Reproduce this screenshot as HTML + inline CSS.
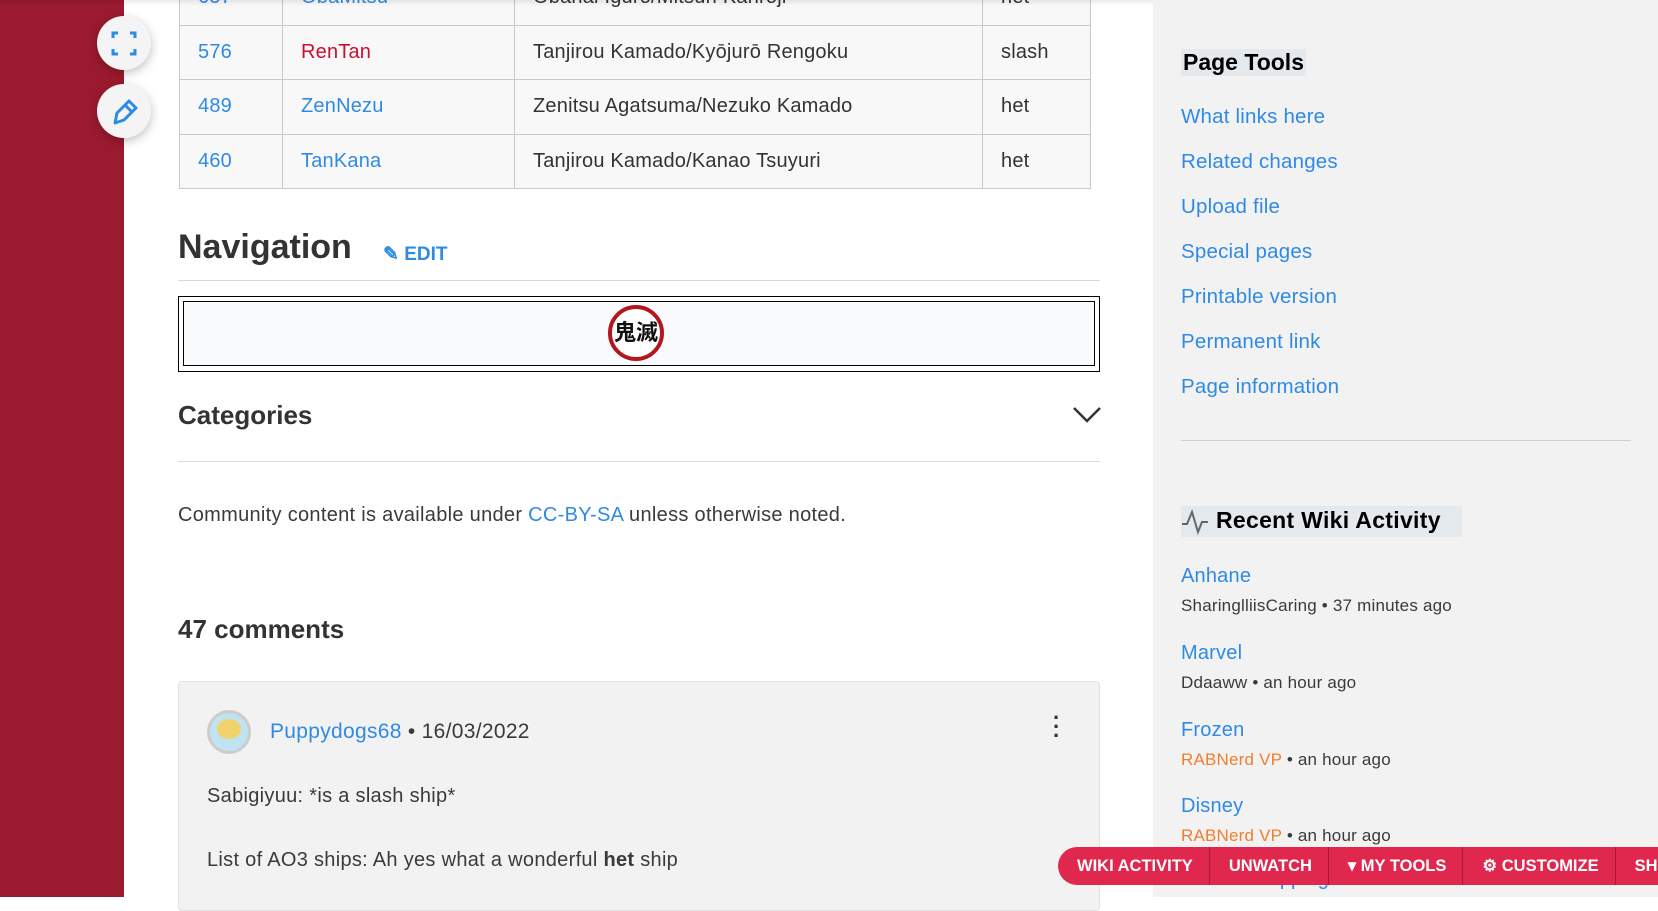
<!DOCTYPE html><html><head><meta charset="utf-8"><style>
*{margin:0;padding:0;box-sizing:border-box}
body{width:1658px;height:897px;overflow:hidden;background:#fff;font-family:"Liberation Sans","Noto Sans CJK JP",sans-serif;color:#3a3a3a;position:relative}
.a{position:absolute;white-space:nowrap}
.b{color:#2f8ae6}
.side{left:0;top:0;width:124px;height:897px;background:#9c1a2f}
.circ{width:54px;height:54px;border-radius:50%;background:#f4f4f4;box-shadow:0 3px 10px rgba(0,0,0,.25);left:97px}
table{position:absolute;left:179px;top:-30px;border-collapse:collapse;font-size:20px;letter-spacing:.2px;background:#f8f8f8}
td{border:1.5px solid #c8c8c8;height:54.5px;padding:0 18px;color:#333}
.rail{left:1153px;top:0;width:505px;height:897px;background:#f2f2f2}
.pt a{display:block;color:#2f8ae6;font-size:20.5px;letter-spacing:.2px;height:45px;text-decoration:none}
.bar{left:1058px;top:847px;width:600px;height:38px;background:#e0284f;border-radius:19px 0 0 19px;color:#fff;font-size:16.5px;font-weight:bold;display:flex;align-items:center;overflow:hidden}
.bar span{padding:0 16px 0 19px;border-right:1px solid #a81a3a;line-height:38px}
</style></head><body>
<div class="a side"></div>
<div class="a circ" style="top:16px"><svg width="54" height="54"><path d="M16 22v-5h5M33 17h5v5M38 33v5h-5M21 38h-5v-5" fill="none" stroke="#2f8ae6" stroke-width="3"/></svg></div>
<div class="a circ" style="top:84px"><svg width="54" height="54"><path d="M18 39l2-10 12-12 7 7-12 12zM28 21l7 7" fill="none" stroke="#2f8ae6" stroke-width="3" stroke-linejoin="round"/></svg></div>
<table>
<tr><td style="width:103px" class="b">657</td><td style="width:232px" class="b">ObaMitsu</td><td style="width:468px">Obanai Iguro/Mitsuri Kanroji</td><td style="width:108px">het</td></tr>
<tr><td class="b">576</td><td style="color:#c8102e">RenTan</td><td>Tanjirou Kamado/Kyōjurō Rengoku</td><td>slash</td></tr>
<tr><td class="b">489</td><td class="b">ZenNezu</td><td>Zenitsu Agatsuma/Nezuko Kamado</td><td>het</td></tr>
<tr><td class="b">460</td><td class="b">TanKana</td><td>Tanjirou Kamado/Kanao Tsuyuri</td><td>het</td></tr>
</table>
<div class="a" style="left:0;top:0;width:1153px;height:6px;background:linear-gradient(rgba(0,0,0,.08),transparent)"></div>
<div class="a" style="left:178px;top:228px;font-size:34px;color:#333;font-weight:bold">Navigation</div>
<div class="a b" style="left:383px;top:243px;font-size:19px;font-weight:bold">✎ EDIT</div>
<div class="a" style="left:178px;top:280px;width:922px;height:1px;background:#d8d8d8"></div>
<div class="a" style="left:178px;top:296px;width:922px;height:76px;border:1.5px solid #000"><div style="margin:4px;height:65px;border:1.5px solid #000;background:#f9fbfc;position:relative"><div style="position:absolute;left:424px;top:3px;width:56px;height:56px;border-radius:50%;border:4px solid #b3161e;background:#fff;font-size:22px;font-weight:bold;color:#111;text-align:center;line-height:48px">鬼滅</div></div></div>
<div class="a" style="left:178px;top:400px;font-size:26px;font-weight:bold;color:#333">Categories</div>
<svg class="a" style="left:1072px;top:405px" width="30" height="20"><path d="M2 3l13 13 13-13" fill="none" stroke="#333" stroke-width="2.5"/></svg>
<div class="a" style="left:178px;top:461px;width:922px;height:1px;background:#d8d8d8"></div>
<div class="a" style="left:178px;top:504px;font-size:20px;letter-spacing:.3px">Community content is available under <span class="b">CC-BY-SA</span> unless otherwise noted.</div>
<div class="a" style="left:178px;top:614px;font-size:26px;font-weight:bold;color:#333">47 comments</div>
<div class="a" style="left:178px;top:681px;width:922px;height:230px;background:#f2f2f2;border:1px solid #e2e2e2;border-radius:4px"></div>
<div class="a" style="left:207px;top:710px;width:44px;height:44px;border-radius:50%;background:#bfe3f0;border:3px solid #ccc"><div style="margin:6px auto;width:24px;height:20px;border-radius:50%;background:#f2d36b"></div></div>
<div class="a" style="left:270px;top:720px;font-size:21px;letter-spacing:.3px"><span class="b">Puppydogs68</span> • 16/03/2022</div>
<div class="a" style="left:1053px;top:713px;font-size:22px;line-height:9px;color:#333;font-weight:bold">·<br>·<br>·</div>
<div class="a" style="left:207px;top:785px;font-size:20px;letter-spacing:.3px">Sabigiyuu: *is a slash ship*</div>
<div class="a" style="left:207px;top:849px;font-size:20px;letter-spacing:.3px">List of AO3 ships: Ah yes what a wonderful <b>het</b> ship</div>
<div class="a rail"></div>
<div class="a" style="left:1181px;top:49px;font-size:23px;font-weight:bold;color:#000;background:#e4e9ee;padding:0 2px">Page Tools</div>
<div class="a pt" style="left:1181px;top:105px"><a>What links here</a><a>Related changes</a><a>Upload file</a><a>Special pages</a><a>Printable version</a><a>Permanent link</a><a>Page information</a></div>
<div class="a" style="left:1181px;top:440px;width:450px;height:1px;background:#d0d0d0"></div>
<div class="a" style="left:1181px;top:506px;width:281px;height:31px;background:#e4e9ee"></div>
<svg class="a" style="left:1181px;top:509px" width="28" height="26"><path d="M1 15h5l5-12 6 20 4-10h6" fill="none" stroke="#666" stroke-width="2"/></svg>
<div class="a" style="left:1216px;top:507px;font-size:23px;font-weight:bold;color:#000;letter-spacing:.3px">Recent Wiki Activity</div>
<div class="a" style="left:1181px;top:562px;font-size:20px;line-height:29px;letter-spacing:.2px"><span class="b">Anhane</span><br><span style="font-size:17px">SharinglliisCaring • 37 minutes ago</span></div>
<div class="a" style="left:1181px;top:639px;font-size:20px;line-height:29px;letter-spacing:.2px"><span class="b">Marvel</span><br><span style="font-size:17px">Ddaaww • an hour ago</span></div>
<div class="a" style="left:1181px;top:716px;font-size:20px;line-height:29px;letter-spacing:.2px"><span class="b">Frozen</span><br><span style="font-size:17px"><span style="color:#f37d2e">RABNerd VP</span> • an hour ago</span></div>
<div class="a" style="left:1181px;top:792px;font-size:20px;line-height:29px;letter-spacing:.2px"><span class="b">Disney</span><br><span style="font-size:17px"><span style="color:#f37d2e">RABNerd VP</span> • an hour ago</span></div>
<div class="a b" style="left:1181px;top:868px;font-size:20px">Fandomshipping</div>
<div class="a bar"><span>WIKI ACTIVITY</span><span>UNWATCH</span><span>▾ MY TOOLS</span><span>⚙ CUSTOMIZE</span><span style="border:0">SHORTCUTS</span></div>
</body></html>
